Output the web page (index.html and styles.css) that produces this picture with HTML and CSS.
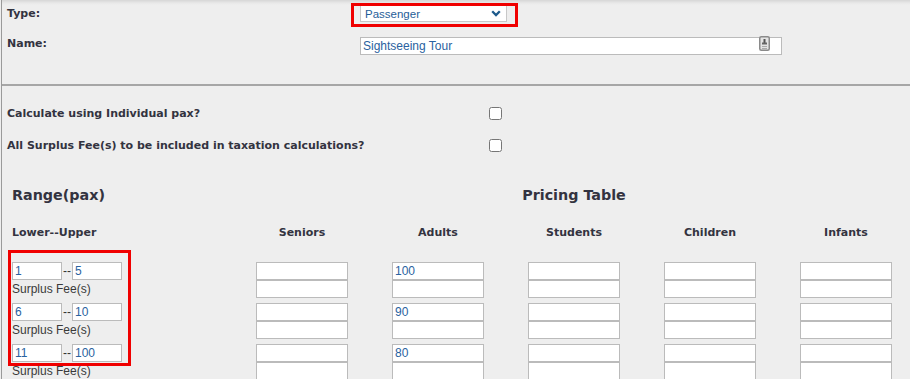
FILE: index.html
```html
<!DOCTYPE html>
<html>
<head>
<meta charset="utf-8">
<link rel="stylesheet" href="styles.css">
</head>
<body>
<div class="page">
  <section class="general">
    <div class="field-row">
      <span class="label">Type:</span>
      <div class="select">
        <span>Passenger</span>
        <svg class="chev" width="10" height="7" viewBox="0 0 10 7"><path d="M1.2 1.2 L5 5 L8.8 1.2" fill="none" stroke="#1d5a8c" stroke-width="2.3"/></svg>
      </div>
    </div>
    <div class="field-row name-row">
      <span class="label">Name:</span>
      <div class="name-field">
        <input class="name-input" type="text" value="Sightseeing Tour">
        <svg class="name-icon" width="11" height="15" viewBox="0 0 11 15">
          <rect x="0.75" y="0.75" width="9.5" height="13.5" rx="1.5" fill="#e4e4e4" stroke="#8a8a8a" stroke-width="1.5"/>
          <rect x="4.5" y="3" width="2" height="4" fill="#555"/>
          <rect x="3" y="6.5" width="5" height="2" fill="#666"/>
          <rect x="3" y="10" width="5" height="1" fill="#aaa"/>
          <rect x="3" y="12" width="5" height="1" fill="#aaa"/>
        </svg>
      </div>
    </div>
  </section>

  <hr class="divider">

  <section class="options">
    <div class="opt-row"><span class="label">Calculate using Individual pax?</span><input class="check" type="checkbox"></div>
    <div class="opt-row"><span class="label">All Surplus Fee(s) to be included in taxation calculations?</span><input class="check" type="checkbox"></div>
  </section>

  <section class="pricing">
    <div class="cols titles">
      <h2 class="title">Range(pax)</h2>
      <h2 class="title table-title">Pricing Table</h2>
    </div>
    <div class="cols heads">
      <span class="head left">Lower--Upper</span>
      <span class="head">Seniors</span>
      <span class="head">Adults</span>
      <span class="head">Students</span>
      <span class="head">Children</span>
      <span class="head">Infants</span>
    </div>

    <div class="cols data-row">
      <div class="range">
        <div class="range-line"><input class="rin" type="text" value="1"><span class="dash">--</span><input class="rin" type="text" value="5"></div>
        <span class="surplus">Surplus Fee(s)</span>
      </div>
      <div class="pair"><input class="pin" type="text"><input class="pin" type="text"></div>
      <div class="pair"><input class="pin" type="text" value="100"><input class="pin" type="text"></div>
      <div class="pair"><input class="pin" type="text"><input class="pin" type="text"></div>
      <div class="pair"><input class="pin" type="text"><input class="pin" type="text"></div>
      <div class="pair"><input class="pin" type="text"><input class="pin" type="text"></div>
    </div>

    <div class="cols data-row">
      <div class="range">
        <div class="range-line"><input class="rin" type="text" value="6"><span class="dash">--</span><input class="rin" type="text" value="10"></div>
        <span class="surplus">Surplus Fee(s)</span>
      </div>
      <div class="pair"><input class="pin" type="text"><input class="pin" type="text"></div>
      <div class="pair"><input class="pin" type="text" value="90"><input class="pin" type="text"></div>
      <div class="pair"><input class="pin" type="text"><input class="pin" type="text"></div>
      <div class="pair"><input class="pin" type="text"><input class="pin" type="text"></div>
      <div class="pair"><input class="pin" type="text"><input class="pin" type="text"></div>
    </div>

    <div class="cols data-row">
      <div class="range">
        <div class="range-line"><input class="rin" type="text" value="11"><span class="dash">--</span><input class="rin" type="text" value="100"></div>
        <span class="surplus">Surplus Fee(s)</span>
      </div>
      <div class="pair"><input class="pin" type="text"><input class="pin" type="text"></div>
      <div class="pair"><input class="pin" type="text" value="80"><input class="pin" type="text"></div>
      <div class="pair"><input class="pin" type="text"><input class="pin" type="text"></div>
      <div class="pair"><input class="pin" type="text"><input class="pin" type="text"></div>
      <div class="pair"><input class="pin" type="text"><input class="pin" type="text"></div>
    </div>
  </section>

  <div class="mark mark-type"></div>
  <div class="mark mark-range"></div>
</div>
</body>
</html>
```

FILE: styles.css
```css
html, body {
  margin: 0;
  padding: 0;
  background: #eeeeee;
  overflow: hidden;
}

.page {
  position: relative;
  width: 908px;
  height: 379px;
  margin-left: 1px;
  border-left: 1px solid #9a9a9a;
  background: linear-gradient(to bottom, #d6d6d6 0, #e8e8e8 3px, #eeeeee 5px);
  font-family: "DejaVu Sans", Verdana, sans-serif;
  color: #333340;
  overflow: hidden;
}

.label {
  font-size: 11px;
  font-weight: bold;
}

/* general fields */
.general {
  padding: 5px 0 0 5px;
  display: flex;
  flex-direction: column;
  gap: 13px;
}

.field-row {
  display: grid;
  grid-template-columns: 353px auto;
  align-items: center;
  height: 17px;
}

.select {
  box-sizing: border-box;
  width: 147px;
  height: 17px;
  background: #fff;
  border: 1px solid #c8c8c8;
  display: flex;
  align-items: center;
  justify-content: space-between;
  padding: 0 5px 0 4px;
  font-family: "Liberation Sans", Arial, sans-serif;
  font-size: 11.5px;
  color: #1f5e98;
}

.chev {
  display: block;
}

.name-field {
  position: relative;
  width: 422px;
  height: 17px;
}

.name-input {
  box-sizing: border-box;
  width: 100%;
  height: 17px;
  margin: 0;
  border: 1px solid #bdbdbd;
  background: #fff;
  padding: 0 2px;
  font-family: "Liberation Sans", Arial, sans-serif;
  font-size: 11.5px;
  color: #1f5e98;
  outline: none;
}

.name-icon {
  position: absolute;
  left: 399px;
  top: 1px;
}

.divider {
  margin: 32px 0 0 0;
  height: 2px;
  border: 0;
  background: #a6a6a6;
}

/* options */
.options {
  padding: 21px 0 0 5px;
  display: flex;
  flex-direction: column;
  gap: 19px;
}

.opt-row {
  display: grid;
  grid-template-columns: 482px auto;
  align-items: center;
  height: 13px;
}

.check {
  margin: 0;
  width: 13px;
  height: 13px;
}

/* pricing */
.pricing {
  padding-top: 34px;
}

.cols {
  display: grid;
  grid-template-columns: 200px repeat(5, 92px);
  column-gap: 44px;
  padding-left: 10px;
}

.title {
  margin: 0;
  font-size: 14.3px;
  line-height: 18px;
  font-weight: bold;
}

.table-title {
  grid-column: 2 / span 5;
  text-align: center;
}

.heads {
  margin-top: 22px;
  margin-bottom: 22px;
}

.head {
  font-size: 11px;
  line-height: 14px;
  font-weight: bold;
  text-align: center;
}

.head.left {
  text-align: left;
}

.data-row {
  height: 36px;
  margin-bottom: 5px;
}

.range {
  display: flex;
  flex-direction: column;
}

.range-line {
  display: flex;
  align-items: center;
  height: 18px;
}

input[type="text"] {
  box-sizing: border-box;
  margin: 0;
  height: 18px;
  border: 1px solid #bbbbbb;
  background: #fff;
  padding: 0 2px;
  font-family: "Liberation Sans", Arial, sans-serif;
  font-size: 12px;
  color: #2a62a0;
  outline: none;
  border-radius: 0;
}

.rin {
  width: 50px;
}

.dash {
  width: 10px;
  text-align: center;
  font-family: "Liberation Sans", Arial, sans-serif;
  font-size: 12px;
  color: #333;
}

.surplus {
  height: 18px;
  line-height: 18px;
  font-family: "Liberation Sans", Arial, sans-serif;
  font-size: 12px;
  color: #3a3a3a;
}

.pair {
  display: flex;
  flex-direction: column;
}

.pin {
  width: 92px;
}

/* annotation overlays */
.mark {
  position: absolute;
  box-sizing: border-box;
  border: 3px solid #f00000;
}

.mark-type {
  left: 349px;
  top: 3px;
  width: 167px;
  height: 24px;
}

.mark-range {
  left: 6px;
  top: 250px;
  width: 123px;
  height: 116px;
}
```
